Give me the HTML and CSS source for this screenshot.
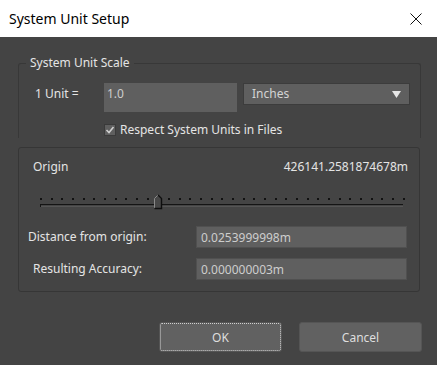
FILE: index.html
```html
<!DOCTYPE html>
<html>
<head>
    <title>System Unit Setup</title>
    <link rel="stylesheet" href="styles.css">
</head>
<body>
    <div class="dialog">
        <div class="titlebar">
            <span class="title">System Unit Setup</span>
            <button class="close-button" aria-label="Close">
                <svg width="12" height="12" viewBox="0 0 12 12">
                    <path d="M0.5 0.5 L11.5 11.5 M11.5 0.5 L0.5 11.5" stroke="#111" stroke-width="1" fill="none"/>
                </svg>
            </button>
        </div>

        <div class="content">
            <fieldset class="scale-group">
                <legend>System Unit Scale</legend>
                <div class="unit-row">
                    <span class="unit-label">1 Unit =</span>
                    <div class="field unit-field">1.0</div>
                    <div class="dropdown">
                        <span>Inches</span>
                        <svg width="9" height="7" viewBox="0 0 9 7">
                            <path d="M0 0 L9 0 L4.5 7 Z" fill="#e6e6e6"/>
                        </svg>
                    </div>
                </div>
                <label class="check-row">
                    <span class="checkbox">
                        <svg width="12" height="12" viewBox="0 0 12 12">
                            <path d="M2.5 6 L5 8.5 L9.5 3" stroke="#d0d0d0" stroke-width="1.6" fill="none"/>
                        </svg>
                    </span>
                    Respect System Units in Files
                </label>
            </fieldset>

            <div class="origin-group">
                <div class="origin-row">
                    <span>Origin</span>
                    <span>426141.2581874678m</span>
                </div>

                <svg class="slider" width="375" height="16" viewBox="0 0 375 16">
                    <g fill="#111">
                        <rect x="7" y="4" width="2" height="2"/>
                        <rect x="18" y="4" width="2" height="2"/>
                        <rect x="28" y="4" width="2" height="2"/>
                        <rect x="39" y="4" width="2" height="2"/>
                        <rect x="50" y="4" width="2" height="2"/>
                        <rect x="60" y="4" width="2" height="2"/>
                        <rect x="71" y="4" width="2" height="2"/>
                        <rect x="82" y="4" width="2" height="2"/>
                        <rect x="92" y="4" width="2" height="2"/>
                        <rect x="103" y="4" width="2" height="2"/>
                        <rect x="114" y="4" width="2" height="2"/>
                        <rect x="135" y="4" width="2" height="2"/>
                        <rect x="146" y="4" width="2" height="2"/>
                        <rect x="156" y="4" width="2" height="2"/>
                        <rect x="167" y="4" width="2" height="2"/>
                        <rect x="178" y="4" width="2" height="2"/>
                        <rect x="188" y="4" width="2" height="2"/>
                        <rect x="199" y="4" width="2" height="2"/>
                        <rect x="210" y="4" width="2" height="2"/>
                        <rect x="220" y="4" width="2" height="2"/>
                        <rect x="231" y="4" width="2" height="2"/>
                        <rect x="242" y="4" width="2" height="2"/>
                        <rect x="252" y="4" width="2" height="2"/>
                        <rect x="263" y="4" width="2" height="2"/>
                        <rect x="274" y="4" width="2" height="2"/>
                        <rect x="284" y="4" width="2" height="2"/>
                        <rect x="295" y="4" width="2" height="2"/>
                        <rect x="306" y="4" width="2" height="2"/>
                        <rect x="316" y="4" width="2" height="2"/>
                        <rect x="327" y="4" width="2" height="2"/>
                        <rect x="338" y="4" width="2" height="2"/>
                        <rect x="348" y="4" width="2" height="2"/>
                        <rect x="359" y="4" width="2" height="2"/>
                        <rect x="370" y="4" width="2" height="2"/>
                    </g>
                    <!-- groove -->
                    <rect x="7" y="10" width="363" height="1" fill="#141414"/>
                    <rect x="7" y="10" width="1" height="3" fill="#141414"/>
                    <rect x="8" y="12" width="362" height="1" fill="#555"/>
                    <!-- thumb -->
                    <path d="M121.5 4.5 L125 1 L128.5 4.5 L128.5 14.5 L121.5 14.5 Z" fill="#474747"/>
                    <path d="M121.5 14 L121.5 4.5 L125 1" stroke="#8a8a8a" stroke-width="1" fill="none"/>
                    <path d="M125 1 L128.5 4.5 L128.5 14.5 L121.5 14.5" stroke="#0e0e0e" stroke-width="1.4" fill="none"/>
                </svg>

                <div class="info-row">
                    <span class="info-label distance-label">Distance from origin:</span>
                    <div class="field info-field">0.0253999998m</div>
                </div>
                <div class="info-row accuracy-row">
                    <span class="info-label accuracy-label">Resulting Accuracy:</span>
                    <div class="field info-field">0.000000003m</div>
                </div>
            </div>

            <div class="buttons">
                <button class="dialog-button ok-button">OK</button>
                <button class="dialog-button">Cancel</button>
            </div>
        </div>
    </div>
</body>
</html>
```

FILE: styles.css
```css
body {
    margin: 0;
    background-color: #fff;
    font-family: "Noto Sans", "Open Sans", sans-serif;
}

.dialog {
    width: 437px;
    height: 365px;
    background-color: #444;
    overflow: hidden;
}

.titlebar {
    height: 37px;
    box-sizing: border-box;
    background-color: #fff;
    display: flex;
    align-items: center;
    justify-content: space-between;
    padding: 0 15px 0 9px;
}

.title {
    font-size: 14px;
    color: #000;
}

.close-button {
    border: none;
    background: none;
    padding: 0;
    width: 12px;
    height: 12px;
    display: flex;
}

.content {
    padding: 18px 17px 0 18px;
    font-size: 12px;
    line-height: 16px;
    color: #e4e4e4;
}

/* group box: system unit scale */
.scale-group {
    margin: 0 0 9px 0;
    padding: 12px 10px 2px 16px;
    border: 1px solid #383838;
    border-bottom: none;
    border-radius: 3px 3px 0 0;
}

.scale-group legend {
    margin-left: -9px;
    padding: 0 4px;
    line-height: 16px;
    color: #e4e4e4;
}

.unit-row {
    display: flex;
    align-items: flex-start;
}

.unit-label {
    width: 69px;
    line-height: 22px;
}

.field {
    background-color: #5f5f5f;
    color: #cdcdcd;
    box-sizing: border-box;
    padding: 0 4px;
    line-height: 22px;
}

.unit-field {
    width: 133px;
    height: 29px;
    padding-left: 3px;
}

.dropdown {
    width: 167px;
    height: 22px;
    margin-left: 6px;
    box-sizing: border-box;
    background-color: #5f5f5f;
    border: 1px solid #3c3c3c;
    color: #d4d4d4;
    display: flex;
    align-items: center;
    justify-content: space-between;
    padding: 0 8px 0 8px;
}

.check-row {
    display: flex;
    align-items: center;
    margin: 12px 0 0 69px;
    height: 12px;
    color: #e4e4e4;
}

.checkbox {
    width: 12px;
    height: 12px;
    box-sizing: border-box;
    background-color: #5f5f5f;
    border: 1px solid #3a3a3a;
    display: flex;
    margin-right: 4px;
}

.checkbox svg {
    margin: -1px;
}

/* group box: origin */
.origin-group {
    border: 1px solid #363636;
    border-radius: 3px;
    padding: 11px 11px 11px 14px;
}

.origin-row {
    display: flex;
    justify-content: space-between;
    line-height: 16px;
}

.slider {
    display: block;
    margin-top: 19px;
}

.info-row {
    display: flex;
    align-items: center;
    margin-top: 16px;
}

.accuracy-row {
    margin-top: 10px;
}

.info-label {
    width: 163px;
}

.distance-label {
    margin-left: -5px;
    width: 168px;
}

.info-field {
    width: 211px;
    height: 22px;
    border: 1px solid #505050;
}

.buttons {
    display: flex;
    justify-content: flex-end;
    gap: 17px;
    margin: 30px -2px 0 0;
}

.dialog-button {
    width: 123px;
    height: 30px;
    background-color: #616161;
    color: #dedede;
    border: 1px solid #555;
    border-radius: 3px;
    font-family: "Noto Sans", "Open Sans", sans-serif;
    font-size: 12px;
}

.ok-button {
    outline: 1px dotted #cfcfcf;
    outline-offset: -2px;
}
```
